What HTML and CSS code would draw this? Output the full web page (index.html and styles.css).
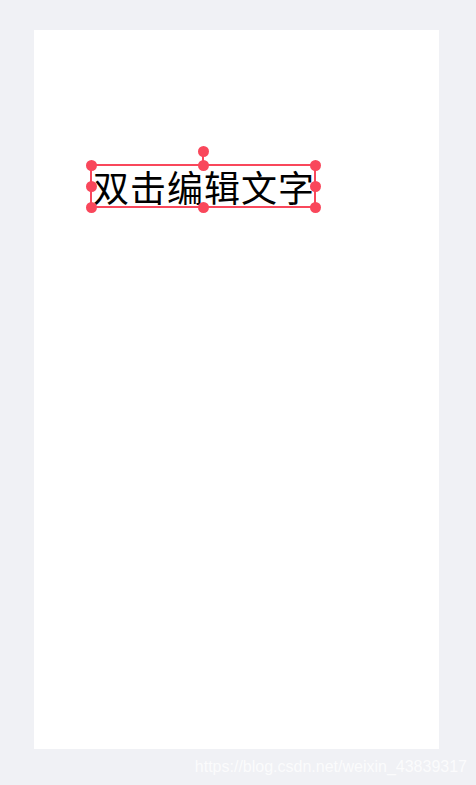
FILE: index.html
```html
<!DOCTYPE html>
<html lang="zh-CN">
<head>
    <meta charset="UTF-8">
    <meta name="viewport" content="width=device-width, initial-scale=1.0">
    <title>文字编辑</title>
    <link rel="stylesheet" href="styles.css">
</head>
<body>
<div class="stage">
    <div class="canvas">
        <div class="text-item">
            <span class="text-content">双击编辑文字</span>
            <span class="rotate-line"></span>
            <span class="handle rotate"></span>
            <span class="handle tl"></span>
            <span class="handle tm"></span>
            <span class="handle tr"></span>
            <span class="handle ml"></span>
            <span class="handle mr"></span>
            <span class="handle bl"></span>
            <span class="handle bm"></span>
            <span class="handle br"></span>
        </div>
    </div>
    <div class="watermark">https://blog.csdn.net/weixin_43839317</div>
</div>
</body>
</html>
```

FILE: styles.css
```css
html, body {
    margin: 0;
    padding: 0;
}
body {
    background-color: #f0f1f5;
    font-family: "Liberation Sans", Arial, sans-serif;
}
.stage {
    position: relative;
    width: 476px;
    height: 785px;
    padding: 30px 0 0 34px;
    box-sizing: border-box;
}
.canvas {
    position: relative;
    width: 405px;
    height: 719px;
    background-color: #fff;
}
.text-item {
    position: absolute;
    left: 56px;
    top: 134px;
    width: 226px;
    height: 44px;
    border: 2px solid #f9475b;
    box-sizing: border-box;
}
.text-content {
    display: block;
    padding-left: 1px;
    font-family: "KaiTi", "STKaiti", "AR PL UKai CN", "Noto Sans CJK SC", serif;
    font-size: 36px;
    line-height: 40px;
    color: #000;
    white-space: nowrap;
    letter-spacing: 1px;
}
.handle {
    position: absolute;
    width: 11px;
    height: 11px;
    margin: -5.5px 0 0 -5.5px;
    border-radius: 50%;
    background-color: #f9475b;
}
.tl { left: -1px; top: -1px; }
.tm { left: 50%; top: -1px; }
.tr { left: calc(100% + 1px); top: -1px; }
.ml { left: -1px; top: 50%; }
.mr { left: calc(100% + 1px); top: 50%; }
.bl { left: -1px; top: calc(100% + 1px); }
.bm { left: 50%; top: calc(100% + 1px); }
.br { left: calc(100% + 1px); top: calc(100% + 1px); }
.rotate { left: 50%; top: -15px; }
.rotate-line {
    position: absolute;
    left: 50%;
    top: -15px;
    width: 2px;
    height: 14px;
    margin-left: -1px;
    background-color: #f9475b;
}
.watermark {
    position: absolute;
    right: 9px;
    bottom: 9px;
    font-size: 16px;
    color: rgba(255, 255, 255, 0.75);
}
```
